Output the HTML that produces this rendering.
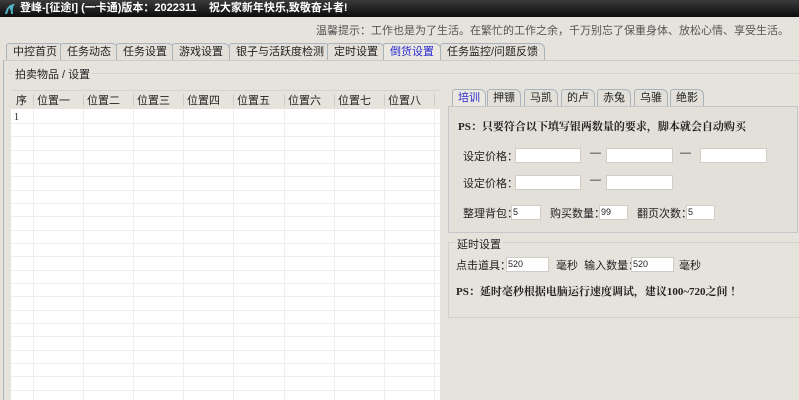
<!DOCTYPE html>
<html><head><meta charset="utf-8"><style>
*{margin:0;padding:0;box-sizing:border-box}
body{width:799px;height:400px;overflow:hidden;background:#e6e3dc;font-family:"Liberation Sans","Noto Sans CJK SC",sans-serif;font-size:11px;color:#222;position:relative}
.a{position:absolute;white-space:nowrap}
.title{left:0;top:0;width:799px;height:17px;background:linear-gradient(#3a3a3a,#0c0c0c);color:#fff;font-size:11px;line-height:17px;padding-left:20px;font-weight:bold}
.tab{position:absolute;top:43px;height:17px;line-height:17px;border:1px solid #a9b3bb;border-bottom:none;border-radius:3px 6px 0 0;background:#e3e0d9;padding:0 6px;font-size:11px}
.inp{position:absolute;background:#fff;border:1px solid #cfcdc6;height:15px;font-size:9px;line-height:13px;padding-left:1px}
.b{font-weight:bold;font-family:"Liberation Serif","Noto Serif CJK SC",serif}
</style></head><body>
<div class="a title">登峰-[征途I]  (一卡通)版本：2022311&nbsp;&nbsp;&nbsp;&nbsp;祝大家新年快乐,致敬奋斗者!</div>
<svg class="a" style="left:4px;top:2px" width="13" height="13"><path d="M1 12 Q3 2 11 2 Q8 5 9 12 L7 12 Q7 7 5 6 Q4 9 3 12Z" fill="#4fb3c8"/></svg>
<div class="a" style="right:10px;top:22px;color:#555">温馨提示：工作也是为了生活。在繁忙的工作之余，千万别忘了保重身体、放松心情、享受生活。</div>
<div class="tab" style="left:6px">中控首页</div>
<div class="tab" style="left:60px">任务动态</div>
<div class="tab" style="left:116px">任务设置</div>
<div class="tab" style="left:172px">游戏设置</div>
<div class="tab" style="left:229px">银子与活跃度检测</div>
<div class="tab" style="left:327px">定时设置</div>
<div class="tab" style="left:383px;color:#2a2ad0;background:#ebe8e2">倒货设置</div>
<div class="tab" style="left:440px">任务监控/问题反馈</div>
<div class="a" style="left:3px;top:60px;width:796px;height:340px;border-left:1px solid #a9b3bb;border-top:1px solid #c9ccc9"></div>
<div class="a" style="left:8px;top:73px;width:792px;height:1px;background:#d6d3cc"></div>
<div class="a" style="left:13px;top:66px;background:#e6e3dc;padding:0 2px;font-size:11px">拍卖物品 / 设置</div>
<svg class="a" style="left:11px;top:90px" width="429" height="310">
<rect x="0" y="0" width="429" height="310" fill="#fff"/>
<rect x="0" y="0" width="429" height="19" fill="#e6e3dc"/>
<line x1="0" y1="0.5" x2="429" y2="0.5" stroke="#d6d3cc"/>
<g stroke="#eeeeee">
<line x1="22.5" y1="19" x2="22.5" y2="310"/><line x1="72.5" y1="19" x2="72.5" y2="310"/><line x1="122.5" y1="19" x2="122.5" y2="310"/><line x1="172.5" y1="19" x2="172.5" y2="310"/><line x1="222.5" y1="19" x2="222.5" y2="310"/><line x1="273.5" y1="19" x2="273.5" y2="310"/><line x1="323.5" y1="19" x2="323.5" y2="310"/><line x1="373.5" y1="19" x2="373.5" y2="310"/><line x1="423.5" y1="19" x2="423.5" y2="310"/>
<line x1="0" y1="33.5" x2="429" y2="33.5"/><line x1="0" y1="46.5" x2="429" y2="46.5"/><line x1="0" y1="60.5" x2="429" y2="60.5"/><line x1="0" y1="73.5" x2="429" y2="73.5"/><line x1="0" y1="86.5" x2="429" y2="86.5"/><line x1="0" y1="100.5" x2="429" y2="100.5"/><line x1="0" y1="113.5" x2="429" y2="113.5"/><line x1="0" y1="126.5" x2="429" y2="126.5"/><line x1="0" y1="140.5" x2="429" y2="140.5"/><line x1="0" y1="153.5" x2="429" y2="153.5"/><line x1="0" y1="166.5" x2="429" y2="166.5"/><line x1="0" y1="180.5" x2="429" y2="180.5"/><line x1="0" y1="193.5" x2="429" y2="193.5"/><line x1="0" y1="206.5" x2="429" y2="206.5"/><line x1="0" y1="220.5" x2="429" y2="220.5"/><line x1="0" y1="233.5" x2="429" y2="233.5"/><line x1="0" y1="246.5" x2="429" y2="246.5"/><line x1="0" y1="260.5" x2="429" y2="260.5"/><line x1="0" y1="273.5" x2="429" y2="273.5"/><line x1="0" y1="286.5" x2="429" y2="286.5"/><line x1="0" y1="300.5" x2="429" y2="300.5"/>
</g>
<g stroke="#cfccc5"><line x1="22.5" y1="4" x2="22.5" y2="16"/><line x1="72.5" y1="4" x2="72.5" y2="16"/><line x1="122.5" y1="4" x2="122.5" y2="16"/><line x1="172.5" y1="4" x2="172.5" y2="16"/><line x1="222.5" y1="4" x2="222.5" y2="16"/><line x1="273.5" y1="4" x2="273.5" y2="16"/><line x1="323.5" y1="4" x2="323.5" y2="16"/><line x1="373.5" y1="4" x2="373.5" y2="16"/><line x1="423.5" y1="4" x2="423.5" y2="16"/></g>
<g font-size="11" fill="#222" font-family="Liberation Sans,Noto Sans CJK SC,sans-serif">
<text x="5" y="14">序</text><text x="26" y="14">位置一</text><text x="76" y="14">位置二</text><text x="126" y="14">位置三</text><text x="176" y="14">位置四</text><text x="226" y="14">位置五</text><text x="277" y="14">位置六</text><text x="327" y="14">位置七</text><text x="377" y="14">位置八</text>
<text x="3" y="30" font-family="Liberation Serif,serif" font-size="10">1</text></g>
</svg>
<div class="tab" style="left:452px;top:89px;color:#2a2ad0;background:#ebe8e2;padding:0 5px">培训</div>
<div class="tab" style="left:487px;top:89px;padding:0 5px">押镖</div>
<div class="tab" style="left:524px;top:89px;padding:0 5px">马凯</div>
<div class="tab" style="left:561px;top:89px;padding:0 5px">的卢</div>
<div class="tab" style="left:597px;top:89px;padding:0 5px">赤兔</div>
<div class="tab" style="left:634px;top:89px;padding:0 5px">乌骓</div>
<div class="tab" style="left:670px;top:89px;padding:0 5px">绝影</div>
<div class="a" style="left:448px;top:106px;width:350px;height:127px;border:1px solid #c4c7c9;background:#e3e0d9"></div>
<div class="a b" style="left:458px;top:118px;font-size:11px">PS：只要符合以下填写银两数量的要求，脚本就会自动购买</div>
<div class="a" style="left:463px;top:148px">设定价格：</div>
<div class="inp" style="left:515px;top:148px;width:66px"></div>
<div class="a" style="left:590px;top:147px">—</div>
<div class="inp" style="left:606px;top:148px;width:67px"></div>
<div class="a" style="left:680px;top:147px">—</div>
<div class="inp" style="left:700px;top:148px;width:67px"></div>
<div class="a" style="left:463px;top:175px">设定价格：</div>
<div class="inp" style="left:515px;top:175px;width:66px"></div>
<div class="a" style="left:590px;top:174px">—</div>
<div class="inp" style="left:606px;top:175px;width:67px"></div>
<div class="a" style="left:463px;top:205px">整理背包：</div>
<div class="inp" style="left:511px;top:205px;width:30px">5</div>
<div class="a" style="left:550px;top:205px">购买数量：</div>
<div class="inp" style="left:599px;top:205px;width:29px">99</div>
<div class="a" style="left:637px;top:205px">翻页次数：</div>
<div class="inp" style="left:686px;top:205px;width:29px">5</div>
<div class="a" style="left:448px;top:242px;width:352px;height:76px;border:1px solid #d3d0c9;border-right:none"></div>
<div class="a" style="left:455px;top:236px;background:#e6e3dc;padding:0 2px">延时设置</div>
<div class="a" style="left:456px;top:257px">点击道具：</div>
<div class="inp" style="left:506px;top:257px;width:43px">520</div>
<div class="a" style="left:556px;top:257px">毫秒&nbsp;&nbsp;输入数量：</div>
<div class="inp" style="left:631px;top:257px;width:43px">520</div>
<div class="a" style="left:679px;top:257px">毫秒</div>
<div class="a b" style="left:456px;top:283px">PS：延时毫秒根据电脑运行速度调试，建议100~720之间 ！</div>
</body></html>
